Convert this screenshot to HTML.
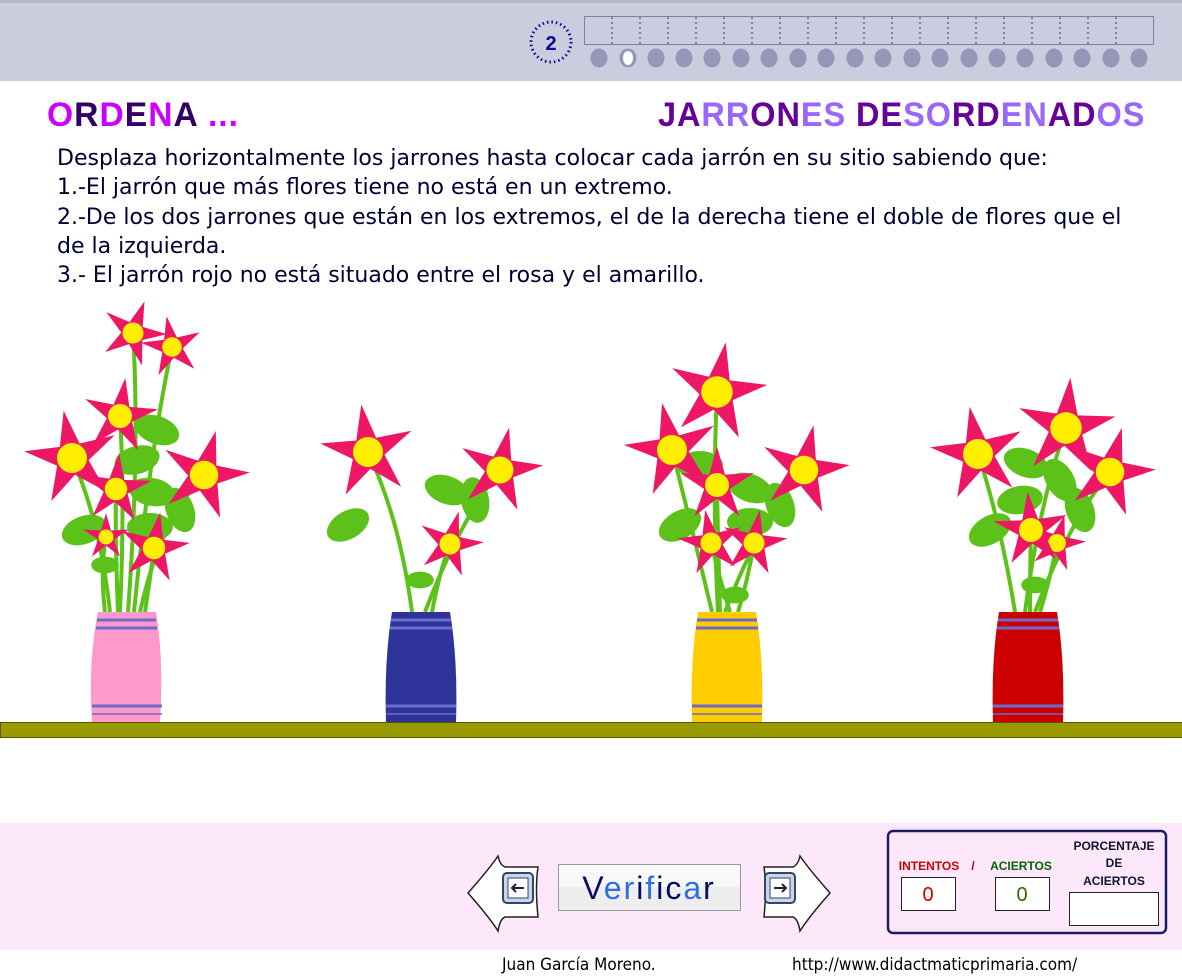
<!DOCTYPE html>
<html><head><meta charset="utf-8">
<style>
*{margin:0;padding:0;box-sizing:border-box}
body{width:1182px;height:977px;background:#fff;position:relative;overflow:hidden;font-family:"DejaVu Sans","Liberation Sans",sans-serif}
#hdr{position:absolute;left:0;top:0;width:1182px;height:81px;background:#ccccdf;border-top:3px solid #b8b8c4}
.t{position:absolute;top:96px;font-family:"Liberation Sans",sans-serif;font-weight:bold;font-size:34px;letter-spacing:1px;transform:scaleX(0.99);transform-origin:left;white-space:nowrap}
#txt{position:absolute;left:57px;top:144px;font-size:22px;line-height:29.3px;color:#000033;width:1120px;white-space:nowrap}
#foot{position:absolute;left:0;top:823px;width:1182px;height:127px;background:#fde8fb}
.cap{position:absolute;top:955px;font-size:17px;color:#000;font-family:"DejaVu Sans Condensed","DejaVu Sans",sans-serif}
</style></head><body>
<div id="hdr"></div>
<svg style="position:absolute;left:0;top:0" width="1182" height="81">
 <circle cx="551" cy="42" r="20" fill="none" stroke="#0a0a99" stroke-width="3" stroke-dasharray="1.5 3"/>
 <text x="551" y="50" text-anchor="middle" font-family="Liberation Sans" font-weight="bold" font-size="20" fill="#0a0a99">2</text>
 <rect x="584.5" y="16.5" width="569" height="28" fill="none" stroke="#333366" stroke-dasharray="1 1"/>
 <g stroke="#333366" stroke-dasharray="2 3">
 <line x1="612" y1="17" x2="612" y2="44"/><line x1="640" y1="17" x2="640" y2="44"/><line x1="668" y1="17" x2="668" y2="44"/><line x1="696" y1="17" x2="696" y2="44"/><line x1="724" y1="17" x2="724" y2="44"/><line x1="752" y1="17" x2="752" y2="44"/><line x1="780" y1="17" x2="780" y2="44"/><line x1="808" y1="17" x2="808" y2="44"/><line x1="836" y1="17" x2="836" y2="44"/><line x1="864" y1="17" x2="864" y2="44"/><line x1="892" y1="17" x2="892" y2="44"/><line x1="920" y1="17" x2="920" y2="44"/><line x1="948" y1="17" x2="948" y2="44"/><line x1="976" y1="17" x2="976" y2="44"/><line x1="1004" y1="17" x2="1004" y2="44"/><line x1="1032" y1="17" x2="1032" y2="44"/><line x1="1060" y1="17" x2="1060" y2="44"/><line x1="1088" y1="17" x2="1088" y2="44"/><line x1="1116" y1="17" x2="1116" y2="44"/></g>
 <g fill="#9696b8">
 <ellipse cx="599" cy="58" rx="8.5" ry="9.5"/><ellipse cx="656" cy="58" rx="8.5" ry="9.5"/><ellipse cx="684" cy="58" rx="8.5" ry="9.5"/><ellipse cx="712" cy="58" rx="8.5" ry="9.5"/><ellipse cx="741" cy="58" rx="8.5" ry="9.5"/><ellipse cx="769" cy="58" rx="8.5" ry="9.5"/><ellipse cx="798" cy="58" rx="8.5" ry="9.5"/><ellipse cx="826" cy="58" rx="8.5" ry="9.5"/><ellipse cx="855" cy="58" rx="8.5" ry="9.5"/><ellipse cx="883" cy="58" rx="8.5" ry="9.5"/><ellipse cx="912" cy="58" rx="8.5" ry="9.5"/><ellipse cx="940" cy="58" rx="8.5" ry="9.5"/><ellipse cx="969" cy="58" rx="8.5" ry="9.5"/><ellipse cx="997" cy="58" rx="8.5" ry="9.5"/><ellipse cx="1025" cy="58" rx="8.5" ry="9.5"/><ellipse cx="1054" cy="58" rx="8.5" ry="9.5"/><ellipse cx="1082" cy="58" rx="8.5" ry="9.5"/><ellipse cx="1111" cy="58" rx="8.5" ry="9.5"/><ellipse cx="1139" cy="58" rx="8.5" ry="9.5"/></g>
 <ellipse cx="628" cy="58" rx="8.5" ry="9.5" fill="#9696b8"/><ellipse cx="628" cy="58" rx="5" ry="7" fill="#fff"/>
</svg>
<div class="t" style="left:47px"><span style="color:#cc00ff">O</span><span style="color:#330066">R</span><span style="color:#cc00ff">D</span><span style="color:#330066">E</span><span style="color:#cc00ff">N</span><span style="color:#330066">A</span><span style="color:#cc00ff"> ...</span></div>
<div class="t" style="left:658px;transform:scaleX(0.955)"><span style="color:#660099">JA</span><span style="color:#9966ff">RR</span><span style="color:#660099">ON</span><span style="color:#9966ff">ES</span> <span style="color:#660099">DE</span><span style="color:#9966ff">SO</span><span style="color:#660099">RD</span><span style="color:#9966ff">EN</span><span style="color:#660099">AD</span><span style="color:#9966ff">OS</span></div>
<div id="txt">Desplaza horizontalmente los jarrones hasta colocar cada jarrón en su sitio sabiendo que:<br>1.-El jarrón que más flores tiene no está en un extremo.<br>2.-De los dos jarrones que están en los extremos, el de la derecha tiene el doble de flores que el<br>de la izquierda.<br>3.- El jarrón rojo no está situado entre el rosa y el amarillo.</div>

<svg style="position:absolute;left:0;top:290px" width="1182" height="460" viewBox="0 290 1182 460">
<defs>
 <g id="f"><polygon points="0,-48 10,-13 46,-15 16,5 28,39 0,17 -28,39 -16,5 -46,-15 -10,-13" fill="#ee1766"/><circle r="15" fill="#ffee00"/></g>
 <ellipse id="l" rx="23" ry="14" fill="#5cc21a"/>
</defs>
<g stroke="#5cc21a" stroke-width="4" fill="none">
 <path d="M110 612 Q100 520 72 458"/><path d="M120 612 Q125 500 120 416"/><path d="M128 612 Q140 450 133 333"/><path d="M134 612 Q150 450 172 347"/><path d="M140 612 Q160 520 204 475"/><path d="M118 612 Q115 540 116 489"/><path d="M145 612 Q150 580 154 548"/><path d="M105 612 Q100 570 106 537"/>
 <path d="M412 612 Q400 520 368 452"/><path d="M425 612 Q460 520 500 470"/><path d="M432 612 Q440 570 450 544"/>
 <path d="M712 612 Q690 520 672 450"/><path d="M718 612 Q712 500 717 392"/><path d="M725 612 Q760 520 804 470"/><path d="M720 612 Q718 540 717 485"/><path d="M730 612 Q720 580 711 543"/><path d="M738 612 Q748 580 754 543"/>
 <path d="M1015 612 Q1000 520 978 454"/><path d="M1025 612 Q1040 500 1066 428"/><path d="M1035 612 Q1070 520 1110 472"/><path d="M1030 612 Q1030 570 1031 530"/><path d="M1040 612 Q1050 580 1057 543"/>
</g>
<use href="#l" transform="translate(157,430) rotate(20)"/><use href="#l" transform="translate(137,460) rotate(-15)"/><use href="#l" transform="translate(152,492) rotate(10)"/><use href="#l" transform="translate(84,530) rotate(-20)"/><use href="#l" transform="translate(180,510) rotate(70)"/><use href="#l" transform="translate(150,527)"/><use href="#l" transform="translate(105,565) scale(.6)"/>
<use href="#l" transform="translate(348,525) rotate(-30)"/><use href="#l" transform="translate(447,490) rotate(20)"/><use href="#l" transform="translate(475,500) rotate(80)"/><use href="#l" transform="translate(420,580) scale(.6)"/>
<use href="#l" transform="translate(680,525) rotate(-30)"/><use href="#l" transform="translate(750,488) rotate(20)"/><use href="#l" transform="translate(780,505) rotate(70)"/><use href="#l" transform="translate(750,522)"/><use href="#l" transform="translate(700,465)"/><use href="#l" transform="translate(735,595) scale(.6)"/>
<use href="#l" transform="translate(990,530) rotate(-30)"/><use href="#l" transform="translate(1026,463) rotate(20)"/><use href="#l" transform="translate(1060,480) rotate(60)"/><use href="#l" transform="translate(1020,500) rotate(-10)"/><use href="#l" transform="translate(1080,510) rotate(70)"/><use href="#l" transform="translate(1035,585) scale(.6)"/>
<use href="#f" transform="translate(133,333) scale(.7) rotate(20)"/><use href="#f" transform="translate(172,347) scale(.65) rotate(-10)"/><use href="#f" transform="translate(120,416) scale(.8) rotate(8)"/><use href="#f" transform="translate(72,458) scale(1) rotate(-10)"/><use href="#f" transform="translate(204,475) scale(.95) rotate(15)"/><use href="#f" transform="translate(116,489) scale(.75) rotate(5)"/><use href="#f" transform="translate(154,548) scale(.75) rotate(10)"/><use href="#f" transform="translate(106,537) scale(.5)"/>
<use href="#f" transform="translate(368,452) scale(1) rotate(-8)"/><use href="#f" transform="translate(500,470) scale(.9) rotate(12)"/><use href="#f" transform="translate(450,544) scale(.7) rotate(15)"/>
<use href="#f" transform="translate(717,392) scale(1.05) rotate(10)"/><use href="#f" transform="translate(672,450) scale(1) rotate(-12)"/><use href="#f" transform="translate(804,470) scale(.95) rotate(12)"/><use href="#f" transform="translate(717,485) scale(.8)"/><use href="#f" transform="translate(711,543) scale(.7) rotate(-10)"/><use href="#f" transform="translate(754,543) scale(.7) rotate(10)"/>
<use href="#f" transform="translate(978,454) scale(1) rotate(-10)"/><use href="#f" transform="translate(1066,428) scale(1.05) rotate(5)"/><use href="#f" transform="translate(1110,472) scale(.95) rotate(15)"/><use href="#f" transform="translate(1057,543) scale(.6) rotate(15)"/><use href="#f" transform="translate(1031,530) scale(.8) rotate(-5)"/>
<g stroke="#6b6bcc" stroke-width="3">
 <path d="M98 612 H156 Q164 660 160 722 H92 Q88 660 98 612Z" fill="#ff99cc" stroke="none"/>
 <line x1="97" y1="620" x2="156" y2="620"/><line x1="96" y1="628" x2="157" y2="628"/><line x1="92" y1="706" x2="162" y2="706"/><line x1="92" y1="714" x2="162" y2="714" stroke-width="1.5"/>
 <path d="M392 612 H450 Q458 660 456 722 H386 Q384 660 392 612Z" fill="#2e3399" stroke="none"/>
 <line x1="391" y1="620" x2="451" y2="620"/><line x1="390" y1="628" x2="452" y2="628"/><line x1="386" y1="706" x2="456" y2="706"/><line x1="386" y1="714" x2="456" y2="714" stroke-width="1.5"/>
 <path d="M698 612 H756 Q764 660 762 722 H692 Q690 660 698 612Z" fill="#ffcc00" stroke="none"/>
 <line x1="697" y1="620" x2="757" y2="620"/><line x1="696" y1="628" x2="758" y2="628"/><line x1="692" y1="706" x2="762" y2="706"/><line x1="692" y1="714" x2="762" y2="714" stroke-width="1.5"/>
 <path d="M999 612 H1057 Q1065 660 1063 722 H993 Q991 660 999 612Z" fill="#cc0000" stroke="none"/>
 <line x1="998" y1="620" x2="1058" y2="620"/><line x1="997" y1="628" x2="1059" y2="628"/><line x1="993" y1="706" x2="1063" y2="706"/><line x1="993" y1="714" x2="1063" y2="714" stroke-width="1.5"/>
</g>
<rect x="0.5" y="722.5" width="1182" height="15" fill="#999900" stroke="#555500"/>
</svg>

<div id="foot"></div>
<svg style="position:absolute;left:0;top:823px" width="1182" height="127">
 <path d="M498 33 Q490 45 468 70 Q490 95 498 108 Q500 96 505 94 L538 94 Q535 64 538 44 L505 44 Q500 42 498 33Z" fill="#fff" stroke="#222" stroke-width="1.5"/>
 <rect x="503" y="50" width="30" height="30" rx="4" fill="#c8d6e8" stroke="#334466" stroke-width="2"/><rect x="508" y="55" width="20" height="20" fill="#fff" stroke="#334466"/>
 <path d="M524 65 H512 M516 61 L512 65 L516 69" stroke="#223" stroke-width="2" fill="none"/>
 <rect x="558.5" y="41.5" width="182" height="46" fill="#eee" stroke="#999"/>
 <rect x="559" y="42" width="181" height="22" fill="#f8f8f8"/>
 <text x="649" y="76" text-anchor="middle" font-family="Liberation Sans" font-size="32" fill="#0a0a66" letter-spacing="2"><tspan>V</tspan><tspan fill="#2b6fe0">er</tspan><tspan>i</tspan><tspan fill="#2b6fe0">f</tspan><tspan>ic</tspan><tspan fill="#2b6fe0">a</tspan><tspan>r</tspan></text>
 <path d="M800 33 Q808 45 830 70 Q808 95 800 108 Q798 96 793 94 L764 94 Q767 64 764 44 L793 44 Q798 42 800 33Z" fill="#fff" stroke="#222" stroke-width="1.5"/>
 <rect x="765" y="50" width="30" height="30" rx="4" fill="#c8d6e8" stroke="#334466" stroke-width="2"/><rect x="770" y="55" width="20" height="20" fill="#fff" stroke="#334466"/>
 <path d="M774 65 H786 M782 61 L786 65 L782 69" stroke="#223" stroke-width="2" fill="none"/>
 <rect x="888" y="8" width="278" height="102" rx="5" fill="#fde8fb" stroke="#1c1c66" stroke-width="2.5"/>
 <text x="929" y="47" text-anchor="middle" font-family="Liberation Sans" font-weight="bold" font-size="12" fill="#cc0000">INTENTOS</text>
 <text x="973" y="47" text-anchor="middle" font-family="Liberation Sans" font-weight="bold" font-size="12" fill="#cc0000">/</text>
 <text x="1021" y="47" text-anchor="middle" font-family="Liberation Sans" font-weight="bold" font-size="12" fill="#006600">ACIERTOS</text>
 <text x="1114" y="27" text-anchor="middle" font-family="Liberation Sans" font-weight="bold" font-size="12" fill="#111133">PORCENTAJE</text>
 <text x="1114" y="44" text-anchor="middle" font-family="Liberation Sans" font-weight="bold" font-size="12" fill="#111133">DE</text>
 <text x="1114" y="62" text-anchor="middle" font-family="Liberation Sans" font-weight="bold" font-size="12" fill="#111133">ACIERTOS</text>
 <rect x="901.5" y="54.5" width="54" height="33" fill="#fff" stroke="#222"/>
 <text x="928" y="78" text-anchor="middle" font-family="Liberation Sans" font-size="20" fill="#cc0000">0</text>
 <rect x="995.5" y="54.5" width="54" height="33" fill="#fff" stroke="#222"/>
 <text x="1022" y="78" text-anchor="middle" font-family="Liberation Sans" font-size="20" fill="#336600">0</text>
 <rect x="1069.5" y="69.5" width="89" height="33" fill="#fff" stroke="#222"/>
</svg>
<div class="cap" style="left:502px">Juan García Moreno.</div>
<div class="cap" style="left:792px">http://www.didactmaticprimaria.com/</div>
</body></html>
